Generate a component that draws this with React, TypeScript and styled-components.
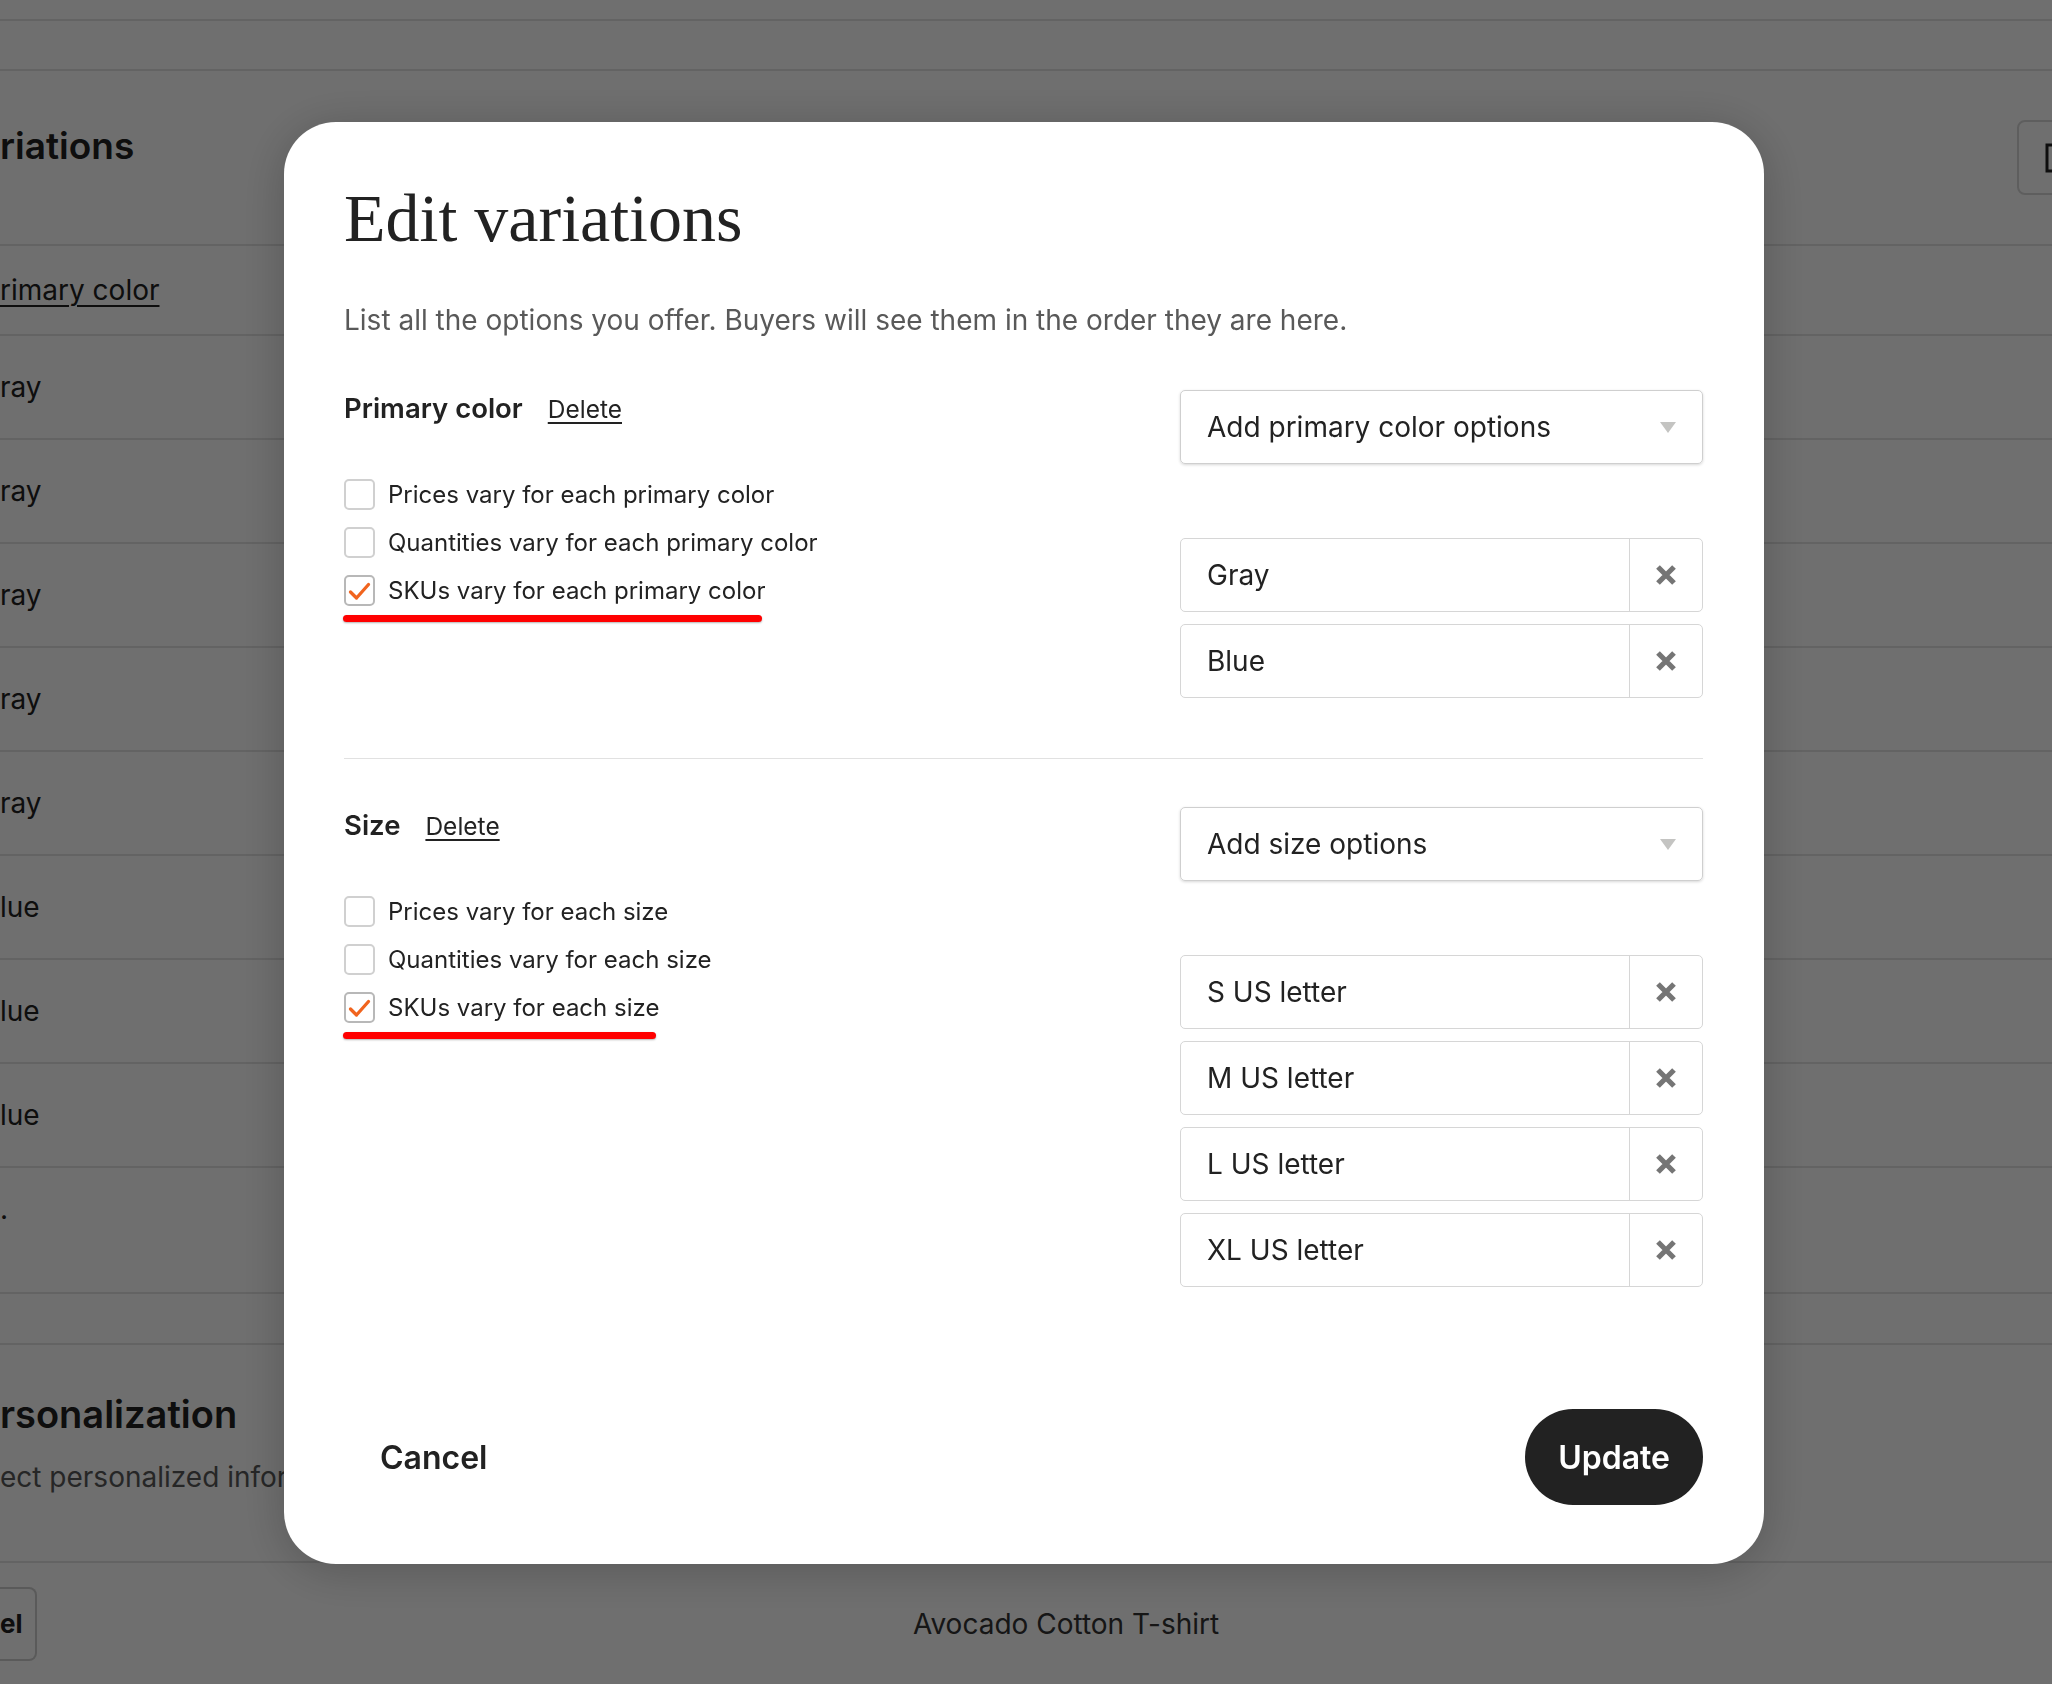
import styled, { createGlobalStyle } from 'styled-components';

const GlobalStyle = createGlobalStyle`
    * {
        box-sizing: border-box;
    }
    html,
    body {
        margin: 0;
        padding: 0;
        overflow: hidden;
        background: #fff;
    }
    body {
        font-family: Inter, 'Noto Sans', sans-serif;
        color: #222;
    }
`;

/* ---------- page behind the dialog ---------- */

const Page = styled.div`
    width: 2052px;
    height: 1684px;
    overflow: hidden;
    display: flex;
    flex-direction: column;
`;

const Band = styled.div<{ $h: number }>`
    height: ${(p) => p.$h}px;
    flex-shrink: 0;
    border-bottom: 2px solid #e4e4e4;
`;

const PageHeader = styled.div`
    height: 175px;
    flex-shrink: 0;
    display: flex;
    align-items: center;
    justify-content: space-between;
    border-bottom: 2px solid #e4e4e4;
`;

const PageTitle = styled.h2`
    margin: 0 0 24px;
    font-size: 37px;
    font-weight: 600;
    line-height: 1;
`;

const IconButton = styled.div`
    width: 95px;
    height: 75px;
    margin-right: -60px;
    border: 2px solid #d8d8d8;
    border-radius: 8px;
    display: flex;
    align-items: center;
    padding-left: 26px;
`;

const TableRow = styled.div<{ $h: number; $lift?: number }>`
    height: ${(p) => p.$h}px;
    flex-shrink: 0;
    display: flex;
    align-items: center;
    padding-bottom: ${(p) => p.$lift ?? 0}px;
    border-bottom: 2px solid #e4e4e4;
    font-size: 28px;
`;

const ColumnLink = styled.span`
    text-decoration: underline;
    text-underline-offset: 5px;
    text-decoration-thickness: 2px;
`;

const PersonalSection = styled.div`
    height: 218px;
    flex-shrink: 0;
    display: flex;
    flex-direction: column;
    justify-content: center;
    gap: 24px;
    padding-bottom: 20px;
    border-bottom: 2px solid #e4e4e4;
`;

const SectionHeading = styled.h3`
    margin: 0;
    font-size: 38px;
    font-weight: 600;
    line-height: 44px;
`;

const SectionNote = styled.p`
    margin: 0;
    font-size: 28px;
    line-height: 34px;
    color: #595959;
    white-space: nowrap;
`;

const PageFooter = styled.div`
    flex: 1;
    display: flex;
    align-items: center;
`;

const GhostButton = styled.div`
    width: 37px;
    height: 74px;
    border: 2px solid #cfcfcf;
    border-left: 0;
    border-radius: 0 8px 8px 0;
    display: flex;
    align-items: center;
    font-size: 26px;
    font-weight: 700;
`;

const ListingName = styled.div`
    margin-left: 876px;
    font-size: 28px;
    color: #333;
`;

/* ---------- dialog ---------- */

const Overlay = styled.div`
    position: fixed;
    inset: 0;
    background: rgba(0, 0, 0, 0.565);
`;

const Modal = styled.div`
    position: absolute;
    left: 284px;
    top: 122px;
    width: 1480px;
    height: 1442px;
    background: #fff;
    border-radius: 52px;
    box-shadow: 0 6px 48px rgba(0, 0, 0, 0.22);
    padding: 56px 61px 59px 60px;
    display: flex;
    flex-direction: column;
`;

const Title = styled.h1`
    margin: 0;
    font-family: 'Liberation Serif', 'DejaVu Serif', serif;
    font-weight: 400;
    font-size: 68px;
    line-height: 80px;
    color: #222;
`;

const Intro = styled.p`
    margin: 45px 0 0;
    font-size: 28px;
    line-height: 34px;
    color: #595959;
`;

const Section = styled.section<{ $first?: boolean }>`
    margin-top: ${(p) => (p.$first ? '53px' : '0')};
    display: grid;
    grid-template-columns: 1fr 523px;
    column-gap: 40px;
`;

const Divider = styled.hr`
    margin: 60px 0 48px;
    border: 0;
    height: 1px;
    background: #e1e1e1;
`;

const SectionHead = styled.div`
    display: flex;
    align-items: baseline;
    gap: 25px;
    height: 36px;
    line-height: 36px;
`;

const SectionName = styled.span`
    font-size: 27.5px;
    font-weight: 600;
    color: #222;
`;

const DeleteLink = styled.a`
    font-size: 24.5px;
    color: #222;
    text-decoration: underline;
    text-underline-offset: 4px;
    cursor: pointer;
`;

const CheckList = styled.ul`
    list-style: none;
    margin: 50px 0 0;
    padding: 0;
    display: flex;
    flex-direction: column;
    align-items: flex-start;
    gap: 12px;
`;

const CheckRow = styled.li<{ $marked?: boolean }>`
    position: relative;
    display: flex;
    align-items: center;
    gap: 13px;
    height: 36px;
    font-size: 24px;
    color: #222;

    &::after {
        content: '';
        display: ${(p) => (p.$marked ? 'block' : 'none')};
        position: absolute;
        left: -1px;
        right: 3px;
        bottom: -14px;
        height: 7px;
        border-radius: 4px;
        background: #ff0000;
        box-shadow: 0 1px 2px rgba(0, 0, 0, 0.3);
    }
`;

const Box = styled.span<{ $checked?: boolean }>`
    width: 31px;
    height: 31px;
    flex-shrink: 0;
    border: 2px solid ${(p) => (p.$checked ? '#b8b8b8' : '#d0d0d0')};
    border-radius: 5px;
    display: flex;
    align-items: center;
    justify-content: center;
`;

const RightColumn = styled.div`
    display: flex;
    flex-direction: column;
`;

const Select = styled.div`
    height: 74px;
    border: 1px solid #cfcfcf;
    border-radius: 5px;
    box-shadow: 0 1px 3px rgba(0, 0, 0, 0.16);
    display: flex;
    align-items: center;
    justify-content: space-between;
    padding: 0 26px;
    font-size: 28px;
    color: #222;
`;

const OptionList = styled.ul`
    list-style: none;
    margin: 74px 0 0;
    padding: 0;
    display: flex;
    flex-direction: column;
    gap: 12px;
`;

const OptionRow = styled.li`
    height: 74px;
    border: 1px solid #d6d6d6;
    border-radius: 5px;
    display: flex;
`;

const OptionLabel = styled.span`
    flex: 1;
    display: flex;
    align-items: center;
    padding: 0 26px;
    font-size: 28px;
    color: #222;
`;

const RemoveButton = styled.button`
    width: 73px;
    border: 0;
    border-left: 1px solid #d6d6d6;
    background: none;
    padding: 0;
    display: flex;
    align-items: center;
    justify-content: center;
    cursor: pointer;
`;

const Footer = styled.div`
    margin-top: auto;
    display: flex;
    align-items: center;
    justify-content: space-between;
`;

const CancelButton = styled.button`
    height: 96px;
    padding: 0 36px;
    border: 0;
    background: none;
    font-family: Inter, 'Noto Sans', sans-serif;
    font-size: 32px;
    font-weight: 600;
    color: #222;
    cursor: pointer;
`;

const UpdateButton = styled.button`
    height: 96px;
    padding: 0 33px;
    border: 0;
    border-radius: 48px;
    background: #222;
    font-family: Inter, 'Noto Sans', sans-serif;
    font-size: 32px;
    font-weight: 600;
    color: #fff;
    cursor: pointer;
`;

function CheckIcon() {
    return (
        <svg width="27" height="27" viewBox="0 0 27 27">
            <path
                d="M4.5 15 L10.5 21 L22.5 7.5"
                fill="none"
                stroke="#f1641e"
                strokeWidth="3.3"
                strokeLinecap="round"
                strokeLinejoin="round"
            />
        </svg>
    );
}

function CaretIcon() {
    return (
        <svg width="16" height="11" viewBox="0 0 16 11">
            <path d="M0 0 H16 L8 11 Z" fill="#c4c4c2" />
        </svg>
    );
}

function CrossIcon() {
    return (
        <svg width="24" height="24" viewBox="0 0 24 24">
            <path d="M4 4 L20 20 M20 4 L4 20" stroke="#757575" strokeWidth="5.2" />
        </svg>
    );
}

type Variation = {
    name: string;
    noun: string;
    placeholder: string;
    options: string[];
};

const variations: Variation[] = [
    {
        name: 'Primary color',
        noun: 'primary color',
        placeholder: 'Add primary color options',
        options: ['Gray', 'Blue'],
    },
    {
        name: 'Size',
        noun: 'size',
        placeholder: 'Add size options',
        options: ['S US letter', 'M US letter', 'L US letter', 'XL US letter'],
    },
];

function VariationSection({ variation, first }: { variation: Variation; first?: boolean }) {
    const checks = [
        { label: `Prices vary for each ${variation.noun}`, checked: false },
        { label: `Quantities vary for each ${variation.noun}`, checked: false },
        { label: `SKUs vary for each ${variation.noun}`, checked: true },
    ];

    return (
        <Section $first={first}>
            <div>
                <SectionHead>
                    <SectionName>{variation.name}</SectionName>
                    <DeleteLink>Delete</DeleteLink>
                </SectionHead>
                <CheckList>
                    {checks.map((c) => (
                        <CheckRow key={c.label} $marked={c.checked}>
                            <Box $checked={c.checked}>{c.checked && <CheckIcon />}</Box>
                            {c.label}
                        </CheckRow>
                    ))}
                </CheckList>
            </div>
            <RightColumn>
                <Select>
                    {variation.placeholder}
                    <CaretIcon />
                </Select>
                <OptionList>
                    {variation.options.map((o) => (
                        <OptionRow key={o}>
                            <OptionLabel>{o}</OptionLabel>
                            <RemoveButton aria-label={`Remove ${o}`}>
                                <CrossIcon />
                            </RemoveButton>
                        </OptionRow>
                    ))}
                </OptionList>
            </RightColumn>
        </Section>
    );
}

const tableValues = ['ray', 'ray', 'ray', 'ray', 'ray', 'lue', 'lue', 'lue'];

export default function App() {
    return (
        <>
            <GlobalStyle />
            <Page>
                <Band $h={21} />
                <Band $h={50} />
                <PageHeader>
                    <PageTitle>riations</PageTitle>
                    <IconButton>
                        <svg width="24" height="30" viewBox="0 0 24 30">
                            <rect x="2" y="2" width="20" height="26" fill="none" stroke="#222" strokeWidth="3" />
                        </svg>
                    </IconButton>
                </PageHeader>
                <TableRow $h={90}>
                    <ColumnLink>rimary color</ColumnLink>
                </TableRow>
                {tableValues.map((v, i) => (
                    <TableRow key={i} $h={104}>
                        {v}
                    </TableRow>
                ))}
                <TableRow $h={126} $lift={42}>
                    .
                </TableRow>
                <Band $h={51} />
                <PersonalSection>
                    <SectionHeading>rsonalization</SectionHeading>
                    <SectionNote>ect personalized information</SectionNote>
                </PersonalSection>
                <PageFooter>
                    <GhostButton>el</GhostButton>
                    <ListingName>Avocado Cotton T-shirt</ListingName>
                </PageFooter>
            </Page>
            <Overlay>
                <Modal role="dialog" aria-labelledby="edit-variations-title">
                    <Title id="edit-variations-title">Edit variations</Title>
                    <Intro>List all the options you offer. Buyers will see them in the order they are here.</Intro>
                    <VariationSection variation={variations[0]} first />
                    <Divider />
                    <VariationSection variation={variations[1]} />
                    <Footer>
                        <CancelButton>Cancel</CancelButton>
                        <UpdateButton>Update</UpdateButton>
                    </Footer>
                </Modal>
            </Overlay>
        </>
    );
}
